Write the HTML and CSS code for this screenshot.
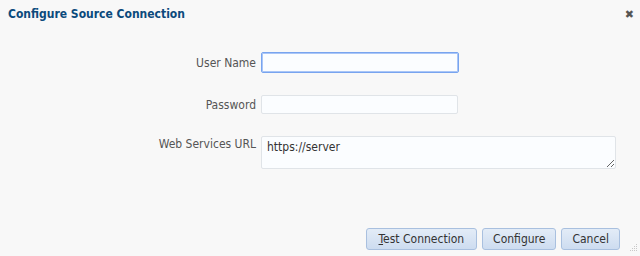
FILE: index.html
```html
<!DOCTYPE html>
<html lang="en">
<head>
    <meta charset="UTF-8">
    <title>Configure Source Connection</title>
    <link rel="stylesheet" href="styles.css">
</head>
<body>
    <div class="dialog">
        <div class="dialog-header">
            <h1 class="dialog-title">Configure Source Connection</h1>
            <span class="close-button">&#x2716;</span>
        </div>

        <div class="form">
            <label class="form-label" for="user-name">User Name</label>
            <div class="form-field">
                <input type="text" id="user-name" class="text-input focused">
            </div>

            <label class="form-label" for="password">Password</label>
            <div class="form-field">
                <input type="password" id="password" class="text-input">
            </div>

            <label class="form-label label-top" for="ws-url">Web Services URL</label>
            <div class="form-field">
                <textarea id="ws-url" class="text-area">https://server</textarea>
            </div>
        </div>

        <div class="dialog-footer">
            <button class="dialog-button test-button"><u>T</u>est Connection</button>
            <button class="dialog-button">Configure</button>
            <button class="dialog-button">Cancel</button>
            <svg class="resize-grip" width="8" height="8" viewBox="0 0 8 8">
                <rect x="6" y="0" width="1" height="1" fill="#c8c8c8"/>
                <rect x="4" y="2" width="1" height="1" fill="#c8c8c8"/>
                <rect x="6" y="2" width="1" height="1" fill="#c8c8c8"/>
                <rect x="2" y="4" width="1" height="1" fill="#c8c8c8"/>
                <rect x="4" y="4" width="1" height="1" fill="#c8c8c8"/>
                <rect x="6" y="4" width="1" height="1" fill="#c8c8c8"/>
                <rect x="0" y="6" width="1" height="1" fill="#c8c8c8"/>
                <rect x="2" y="6" width="1" height="1" fill="#c8c8c8"/>
                <rect x="4" y="6" width="1" height="1" fill="#c8c8c8"/>
                <rect x="6" y="6" width="1" height="1" fill="#c8c8c8"/>
            </svg>
        </div>
    </div>
</body>
</html>
```

FILE: styles.css
```css
html, body {
    margin: 0;
    padding: 0;
    height: 100%;
}
body {
    font-family: "DejaVu Sans Condensed", "DejaVu Sans", sans-serif;
    font-size: 12px;
    color: #333;
    background-color: #f8f8f8;
}
.dialog {
    height: 256px;
    display: flex;
    flex-direction: column;
    box-sizing: border-box;
}
.dialog-header {
    display: flex;
    justify-content: space-between;
    align-items: center;
    padding: 6px 6px 0 8px;
    height: 16px;
}
.dialog-title {
    margin: 0;
    font-size: 12px;
    font-weight: bold;
    color: #0b4a7c;
}
.close-button {
    font-family: "DejaVu Sans", sans-serif;
    font-size: 11px;
    color: #555;
}
.form {
    display: grid;
    grid-template-columns: 256px 356px;
    column-gap: 5px;
    row-gap: 22px;
    margin-top: 30px;
}
.form-label {
    text-align: right;
    color: #555;
    align-self: center;
}
.label-top {
    align-self: start;
    padding-top: 1px;
}
.form-field {
    display: flex;
}
.text-input {
    box-sizing: border-box;
    width: 197px;
    height: 19px;
    padding: 0 4px;
    border: 1px solid #e0e4e8;
    border-radius: 2px;
    background-color: #fbfdff;
    font-family: inherit;
    font-size: 12px;
    outline: none;
}
.text-input.focused {
    width: 198px;
    height: 21px;
    border: 1px solid #78a4ef;
    box-shadow: inset 0 0 0 1px #aac6f7;
}
.text-area {
    box-sizing: border-box;
    width: 355px;
    height: 33px;
    padding: 3px 5px;
    border: 1px solid #e0e4e8;
    border-radius: 2px;
    background-color: #fbfdff;
    font-family: inherit;
    font-size: 12px;
    color: #333;
    outline: none;
}
.dialog-footer {
    margin-top: auto;
    display: flex;
    justify-content: flex-end;
    align-items: flex-end;
    gap: 5px;
    padding: 0 0 6px 0;
}
.dialog-button {
    height: 22px;
    padding: 0 10px;
    border: 1px solid #a9c0df;
    border-radius: 3px;
    background: linear-gradient(#e3ecf7, #cddcf0);
    font-family: inherit;
    font-size: 12px;
    color: #333;
    cursor: pointer;
}
.test-button {
    padding: 0 12px;
}
.dialog-button u {
    text-decoration: underline;
}
.resize-grip {
    margin-left: 5px;
    margin-right: 2px;
    margin-bottom: -2px;
}
```
